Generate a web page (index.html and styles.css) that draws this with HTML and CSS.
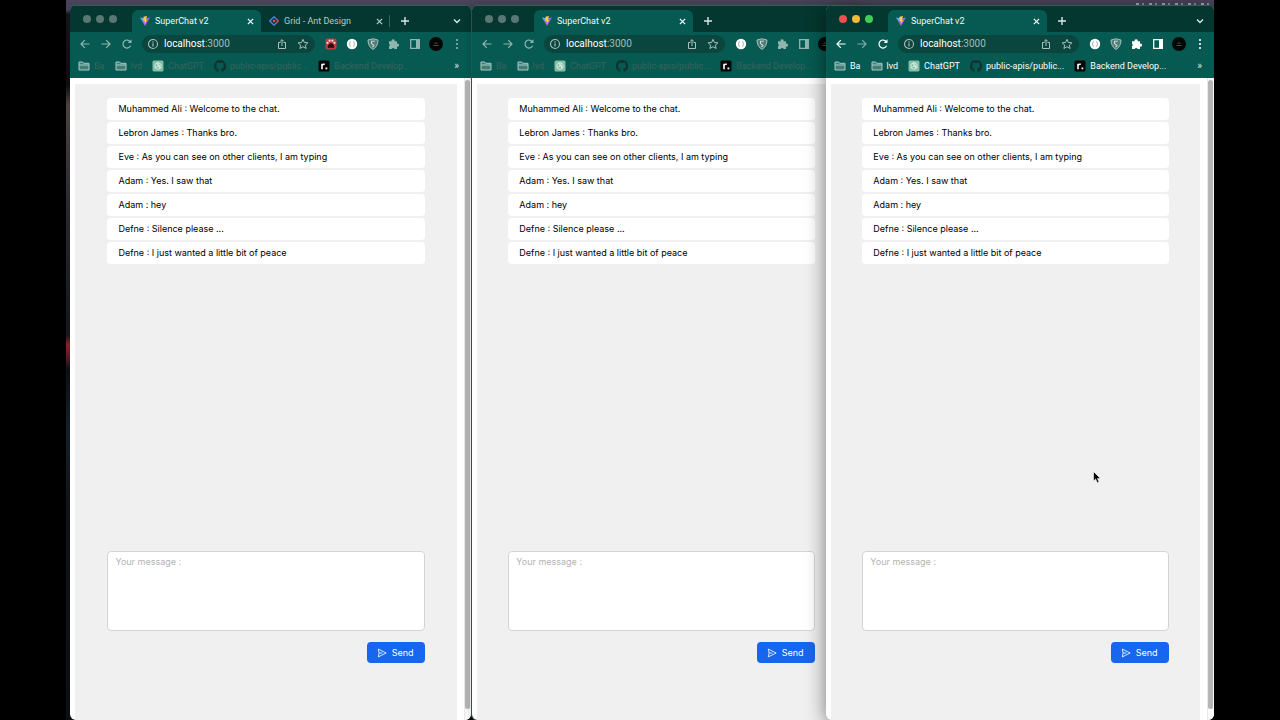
FILE: index.html
```
<!DOCTYPE html>
<html lang="en">
<head>
	<meta charset="UTF-8">
	<meta name="viewport" content="width=device-width, initial-scale=1.0">
	<title>SuperChat v2</title>
	<link rel="stylesheet" href="styles.css">
</head>
<body>

<!-- shared icons -->
<svg class="sprite" aria-hidden="true">
	<defs>
		<linearGradient id="viteBlue" x1="0" y1="0" x2="1" y2="1">
			<stop offset="0" stop-color="#41d1ff"/>
			<stop offset="0.5" stop-color="#a45cf0"/>
			<stop offset="1" stop-color="#e05ac8"/>
		</linearGradient>
		<linearGradient id="antRing" x1="0" y1="0" x2="1" y2="0">
			<stop offset="0" stop-color="#3f8cf5"/>
			<stop offset="0.6" stop-color="#5a6fd8"/>
			<stop offset="1" stop-color="#f0455a"/>
		</linearGradient>
	</defs>
	<symbol id="vite" viewBox="0 0 20 20">
		<path d="M0 3 10 20 20 3 10 5Z" fill="url(#viteBlue)"/>
		<path d="M14 0 7 1.500 6.500 9.500 9 9 8.300 12 10 11.500 9 17 14.500 7.500 11.800 8Z" fill="#ffd02f"/>
	</symbol>
	<symbol id="antd" viewBox="0 0 20 20">
		<path d="M10 1.500 18.500 10 10 18.500 1.500 10Z" fill="none" stroke="url(#antRing)" stroke-width="2.800" stroke-linejoin="round"/>
		<circle cx="10" cy="10" r="2.500" fill="#f0455a"/>
	</symbol>
	<symbol id="close" viewBox="0 0 12 12">
		<path d="M2.500 2.500 9.500 9.500M9.500 2.500 2.500 9.500" fill="none" stroke="currentColor" stroke-width="1.600"/>
	</symbol>
	<symbol id="plus" viewBox="0 0 12 12">
		<path d="M6 2V10M2 6H10" fill="none" stroke="currentColor" stroke-width="1.400"/>
	</symbol>
	<symbol id="down" viewBox="0 0 12 12">
		<path d="M3 4.500 6 7.500 9 4.500" fill="none" stroke="currentColor" stroke-width="1.400"/>
	</symbol>
	<symbol id="back" viewBox="0 0 12 12">
		<path d="M10.500 6H2M5.800 2.200 2 6 5.800 9.800" fill="none" stroke="currentColor" stroke-width="1.200"/>
	</symbol>
	<symbol id="forward" viewBox="0 0 12 12">
		<path d="M1.500 6H10M6.200 2.200 10 6 6.200 9.800" fill="none" stroke="currentColor" stroke-width="1.200"/>
	</symbol>
	<symbol id="reload" viewBox="0 0 12 12">
		<path d="M9.600 7.800A4 4 0 1 1 9.200 3.600" fill="none" stroke="currentColor" stroke-width="1.200"/>
		<path d="M10.500 1.300V5H6.800Z" fill="currentColor"/>
	</symbol>
	<symbol id="info" viewBox="0 0 12 12">
		<circle cx="6" cy="6" r="4.500" fill="none" stroke="currentColor" stroke-width="1.100"/>
		<path d="M6 5.300V8.500M6 3.300V4.500" fill="none" stroke="currentColor" stroke-width="1.200"/>
	</symbol>
	<symbol id="share" viewBox="0 0 12 12">
		<path d="M4.500 4.500H2.500V10.500H9.500V4.500H7.500M6 8V1.800M4.200 3.400 6 1.600 7.800 3.400" fill="none" stroke="currentColor" stroke-width="1"/>
	</symbol>
	<symbol id="star" viewBox="0 0 12 12">
		<path d="M6 1.300 7.400 4.500 10.900 4.800 8.300 7.100 9.100 10.500 6 8.700 2.900 10.500 3.700 7.100 1.100 4.800 4.600 4.500Z" fill="none" stroke="currentColor" stroke-width="1"/>
	</symbol>
	<symbol id="paw" viewBox="0 0 12 12">
		<rect x="0.500" y="0.500" width="11" height="11" rx="2" fill="#c23b42"/>
		<path d="M6 5.200C8 5.200 9.600 8 9.200 9.300 8.800 10.600 7.500 9.800 6 9.800S3.200 10.600 2.800 9.300C2.400 8 4 5.200 6 5.200Z" fill="#2b0d12"/>
		<g fill="#f3dcdc"><circle cx="2.500" cy="4.800" r="1.100"/><circle cx="4.600" cy="2.700" r="1.100"/><circle cx="7.400" cy="2.700" r="1.100"/><circle cx="9.500" cy="4.800" r="1.100"/></g>
	</symbol>
	<symbol id="json" viewBox="0 0 12 12">
		<circle cx="6" cy="6" r="5.200" fill="#fff"/>
		<path d="M4.700 3.500C3.500 3.500 4.300 5.500 3.200 6 4.300 6.500 3.500 8.500 4.700 8.500M7.300 3.500C8.500 3.500 7.700 5.500 8.800 6 7.700 6.500 8.500 8.500 7.300 8.500" fill="none" stroke="#8c9a98" stroke-width="0.900"/>
	</symbol>
	<symbol id="shield" viewBox="0 0 12 12">
		<path d="M6 0.800 11 2C11 6.500 9 9.700 6 11.400 3 9.700 1 6.500 1 2Z" fill="#4f7d78" stroke="#a9c0bc" stroke-width="1"/>
		<path d="M7.800 3.300H4.500V5.500L7 7.500 5.500 9" fill="none" stroke="#c9d8d5" stroke-width="1.100"/>
	</symbol>
	<symbol id="puzzle" viewBox="0 0 12 12">
		<path d="M1 3.300H3.700A1.500 1.500 0 1 1 6.500 3.300H9V5.700A1.500 1.500 0 1 1 9 8.500V11H6.600A1.500 1.500 0 0 0 3.700 11H1V8.300A1.500 1.500 0 0 0 1 5.700Z" fill="currentColor"/>
	</symbol>
	<symbol id="panel" viewBox="0 0 12 12">
		<path d="M1.700 1.700H10.300V10.300H1.700Z" fill="none" stroke="currentColor" stroke-width="1.300"/>
		<path d="M7 1.500H10.500V10.500H7Z" fill="currentColor"/>
	</symbol>
	<symbol id="avatar" viewBox="0 0 14 14">
		<circle cx="7" cy="7" r="7" fill="#050707"/>
		<path d="M4.500 8.500H9.500M5.500 7 7 5.500 8.500 7" fill="none" stroke="#7a4640" stroke-width="0.900"/>
	</symbol>
	<symbol id="dots" viewBox="0 0 12 12">
		<g fill="currentColor"><circle cx="6" cy="2" r="1.100"/><circle cx="6" cy="6" r="1.100"/><circle cx="6" cy="10" r="1.100"/></g>
	</symbol>
	<symbol id="folder" viewBox="0 0 12 12">
		<path d="M1 10V2H4.700L5.700 3.300H11V10Z" fill="#3f7f77" stroke="currentColor" stroke-width="1"/>
		<path d="M1 5H11" stroke="currentColor" stroke-width="1.100"/>
	</symbol>
	<symbol id="gpt" viewBox="0 0 12 12">
		<rect x="0.500" y="0.500" width="11" height="11" rx="1.500" fill="#84bda6"/>
		<path d="M6 2.500 9 4.300V7.700L6 9.500 3 7.700V4.300ZM6 2.500V6L9 7.700M6 6 3 7.700M4.500 3.500 7.500 5.200V8.500" fill="none" stroke="#e4f4ec" stroke-width="0.800"/>
	</symbol>
	<symbol id="github" viewBox="0 0 16 16">
		<path fill="#10332f" d="M8 0a8 8 0 0 0-2.530 15.590c.4.070.55-.17.550-.38v-1.490c-2.230.490-2.700-.94-2.700-.94-.36-.93-.89-1.170-.89-1.170-.73-.5.060-.49.060-.49.800.060 1.230.830 1.230.830.710 1.220 1.870.870 2.330.660.070-.52.280-.87.510-1.070-1.780-.2-3.640-.89-3.640-3.950 0-.87.310-1.590.820-2.150-.08-.2-.36-1.020.080-2.120 0 0 .67-.21 2.200.820a7.600 7.600 0 0 1 4 0c1.530-1.040 2.200-.82 2.200-.82.440 1.100.160 1.920.080 2.120.510.560.820 1.270.820 2.150 0 3.070-1.870 3.750-3.650 3.950.290.250.540.730.540 1.480v2.200c0 .21.150.46.550.38A8 8 0 0 0 8 0Z"/>
	</symbol>
	<symbol id="roadmap" viewBox="0 0 12 12">
		<rect x="0.500" y="0.500" width="11" height="11" rx="1.500" fill="#050707"/>
		<path d="M4 9.300V3.800M4 6C4 4.500 5 4 6.800 4.300" fill="none" stroke="#fff" stroke-width="1.600"/>
		<rect x="7.500" y="7.500" width="1.800" height="1.800" fill="#fff"/>
	</symbol>
	<symbol id="send" viewBox="0 0 12 12">
		<path d="M1.500 1.300 11 6 1.500 10.700 2.600 6ZM2.600 6H6.500" fill="none" stroke="currentColor" stroke-width="1" stroke-linejoin="round"/>
	</symbol>
</svg>

<div class="desktop">
	<div class="menubar-edge"></div>

	<!-- first client -->
	<section class="window window-one">
		<header class="chrome">
			<div class="tabs">
				<div class="lights"><span></span><span></span><span></span></div>
				<div class="tab active">
					<svg class="fav"><use href="#vite"/></svg>
					<span class="tab-title">SuperChat v2</span>
					<button type="button" class="tab-close" aria-label="Close tab"><svg class="icon-small"><use href="#close"/></svg></button>
				</div>
				<div class="tab last">
					<svg class="fav"><use href="#antd"/></svg>
					<span class="tab-title">Grid - Ant Design</span>
					<button type="button" class="tab-close" aria-label="Close tab"><svg class="icon-small"><use href="#close"/></svg></button>
				</div>
				<button type="button" class="tool new-tab" aria-label="New tab"><svg class="icon"><use href="#plus"/></svg></button>
				<button type="button" class="tool tab-list" aria-label="Search tabs"><svg class="icon"><use href="#down"/></svg></button>
			</div>
			<div class="toolbar">
				<button type="button" class="tool" aria-label="Back"><svg class="icon"><use href="#back"/></svg></button>
				<button type="button" class="tool" aria-label="Forward"><svg class="icon"><use href="#forward"/></svg></button>
				<button type="button" class="tool" aria-label="Reload"><svg class="icon"><use href="#reload"/></svg></button>
				<div class="address">
					<svg class="icon"><use href="#info"/></svg>
					<span class="url">localhost<span class="port">:3000</span></span>
					<button type="button" class="tool" aria-label="Share"><svg class="icon"><use href="#share"/></svg></button>
					<button type="button" class="tool" aria-label="Bookmark"><svg class="icon"><use href="#star"/></svg></button>
				</div>
				<button type="button" class="tool" aria-label="Paw extension"><svg class="icon"><use href="#paw"/></svg></button>
				<button type="button" class="tool" aria-label="JSON viewer"><svg class="icon"><use href="#json"/></svg></button>
				<button type="button" class="tool" aria-label="Shield"><svg class="icon"><use href="#shield"/></svg></button>
				<button type="button" class="tool" aria-label="Extensions"><svg class="icon"><use href="#puzzle"/></svg></button>
				<button type="button" class="tool" aria-label="Side panel"><svg class="icon"><use href="#panel"/></svg></button>
				<button type="button" class="tool" aria-label="Profile"><svg class="avatar"><use href="#avatar"/></svg></button>
				<button type="button" class="tool" aria-label="Menu"><svg class="icon"><use href="#dots"/></svg></button>
			</div>
			<nav class="bookmarks">
				<a href="#"><svg class="icon"><use href="#folder"/></svg><span>Ba</span></a>
				<a href="#"><svg class="icon"><use href="#folder"/></svg><span>lvd</span></a>
				<a href="#"><svg class="icon"><use href="#gpt"/></svg><span>ChatGPT</span></a>
				<a href="#"><svg class="icon"><use href="#github"/></svg><span>public-apis/public...</span></a>
				<a href="#"><svg class="icon"><use href="#roadmap"/></svg><span>Backend Develop...</span></a>
				<button type="button" class="tool more" aria-label="More bookmarks">»</button>
			</nav>
		</header>
		<div class="viewport">
			<main class="page">
				<form class="chat">
					<ul class="messages">
						<li>Muhammed Ali : Welcome to the chat.</li>
						<li>Lebron James : Thanks bro.</li>
						<li>Eve : As you can see on other clients, I am typing</li>
						<li>Adam : Yes. I saw that</li>
						<li>Adam : hey</li>
						<li>Defne : Silence please ...</li>
						<li>Defne : I just wanted a little bit of peace</li>
					</ul>
					<textarea class="message-input" aria-label="Your message" placeholder="Your message :"></textarea>
					<button type="button" class="send"><svg class="icon-send"><use href="#send"/></svg>Send</button>
				</form>
			</main>
			<div class="scrollbar"><div class="thumb"></div></div>
		</div>
	</section>

	<!-- second client -->
	<section class="window window-two">
		<header class="chrome">
			<div class="tabs">
				<div class="lights"><span></span><span></span><span></span></div>
				<div class="tab active">
					<svg class="fav"><use href="#vite"/></svg>
					<span class="tab-title">SuperChat v2</span>
					<button type="button" class="tab-close" aria-label="Close tab"><svg class="icon-small"><use href="#close"/></svg></button>
				</div>
				<button type="button" class="tool new-tab" aria-label="New tab"><svg class="icon"><use href="#plus"/></svg></button>
				<button type="button" class="tool tab-list" aria-label="Search tabs"><svg class="icon"><use href="#down"/></svg></button>
			</div>
			<div class="toolbar">
				<button type="button" class="tool" aria-label="Back"><svg class="icon"><use href="#back"/></svg></button>
				<button type="button" class="tool" aria-label="Forward"><svg class="icon"><use href="#forward"/></svg></button>
				<button type="button" class="tool" aria-label="Reload"><svg class="icon"><use href="#reload"/></svg></button>
				<div class="address">
					<svg class="icon"><use href="#info"/></svg>
					<span class="url">localhost<span class="port">:3000</span></span>
					<button type="button" class="tool" aria-label="Share"><svg class="icon"><use href="#share"/></svg></button>
					<button type="button" class="tool" aria-label="Bookmark"><svg class="icon"><use href="#star"/></svg></button>
				</div>
				<button type="button" class="tool" aria-label="JSON viewer"><svg class="icon"><use href="#json"/></svg></button>
				<button type="button" class="tool" aria-label="Shield"><svg class="icon"><use href="#shield"/></svg></button>
				<button type="button" class="tool" aria-label="Extensions"><svg class="icon"><use href="#puzzle"/></svg></button>
				<button type="button" class="tool" aria-label="Side panel"><svg class="icon"><use href="#panel"/></svg></button>
				<button type="button" class="tool" aria-label="Profile"><svg class="avatar"><use href="#avatar"/></svg></button>
				<button type="button" class="tool" aria-label="Menu"><svg class="icon"><use href="#dots"/></svg></button>
			</div>
			<nav class="bookmarks">
				<a href="#"><svg class="icon"><use href="#folder"/></svg><span>Ba</span></a>
				<a href="#"><svg class="icon"><use href="#folder"/></svg><span>lvd</span></a>
				<a href="#"><svg class="icon"><use href="#gpt"/></svg><span>ChatGPT</span></a>
				<a href="#"><svg class="icon"><use href="#github"/></svg><span>public-apis/public...</span></a>
				<a href="#"><svg class="icon"><use href="#roadmap"/></svg><span>Backend Develop...</span></a>
			</nav>
		</header>
		<div class="viewport">
			<main class="page">
				<form class="chat">
					<ul class="messages">
						<li>Muhammed Ali : Welcome to the chat.</li>
						<li>Lebron James : Thanks bro.</li>
						<li>Eve : As you can see on other clients, I am typing</li>
						<li>Adam : Yes. I saw that</li>
						<li>Adam : hey</li>
						<li>Defne : Silence please ...</li>
						<li>Defne : I just wanted a little bit of peace</li>
					</ul>
					<textarea class="message-input" aria-label="Your message" placeholder="Your message :"></textarea>
					<button type="button" class="send"><svg class="icon-send"><use href="#send"/></svg>Send</button>
				</form>
			</main>
			<div class="scrollbar"><div class="thumb"></div></div>
		</div>
	</section>

	<!-- third client, focused -->
	<section class="window window-three focused">
		<header class="chrome">
			<div class="tabs">
				<div class="lights"><span></span><span></span><span></span></div>
				<div class="tab active">
					<svg class="fav"><use href="#vite"/></svg>
					<span class="tab-title">SuperChat v2</span>
					<button type="button" class="tab-close" aria-label="Close tab"><svg class="icon-small"><use href="#close"/></svg></button>
				</div>
				<button type="button" class="tool new-tab" aria-label="New tab"><svg class="icon"><use href="#plus"/></svg></button>
				<button type="button" class="tool tab-list" aria-label="Search tabs"><svg class="icon"><use href="#down"/></svg></button>
			</div>
			<div class="toolbar">
				<button type="button" class="tool" aria-label="Back"><svg class="icon"><use href="#back"/></svg></button>
				<button type="button" class="tool faded" aria-label="Forward"><svg class="icon"><use href="#forward"/></svg></button>
				<button type="button" class="tool" aria-label="Reload"><svg class="icon"><use href="#reload"/></svg></button>
				<div class="address">
					<svg class="icon"><use href="#info"/></svg>
					<span class="url">localhost<span class="port">:3000</span></span>
					<button type="button" class="tool" aria-label="Share"><svg class="icon"><use href="#share"/></svg></button>
					<button type="button" class="tool" aria-label="Bookmark"><svg class="icon"><use href="#star"/></svg></button>
				</div>
				<button type="button" class="tool" aria-label="JSON viewer"><svg class="icon"><use href="#json"/></svg></button>
				<button type="button" class="tool" aria-label="Shield"><svg class="icon"><use href="#shield"/></svg></button>
				<button type="button" class="tool" aria-label="Extensions"><svg class="icon"><use href="#puzzle"/></svg></button>
				<button type="button" class="tool" aria-label="Side panel"><svg class="icon"><use href="#panel"/></svg></button>
				<button type="button" class="tool" aria-label="Profile"><svg class="avatar"><use href="#avatar"/></svg></button>
				<button type="button" class="tool" aria-label="Menu"><svg class="icon"><use href="#dots"/></svg></button>
			</div>
			<nav class="bookmarks">
				<a href="#"><svg class="icon"><use href="#folder"/></svg><span>Ba</span></a>
				<a href="#"><svg class="icon"><use href="#folder"/></svg><span>lvd</span></a>
				<a href="#"><svg class="icon"><use href="#gpt"/></svg><span>ChatGPT</span></a>
				<a href="#"><svg class="icon"><use href="#github"/></svg><span>public-apis/public...</span></a>
				<a href="#"><svg class="icon"><use href="#roadmap"/></svg><span>Backend Develop...</span></a>
				<button type="button" class="tool more" aria-label="More bookmarks">»</button>
			</nav>
		</header>
		<div class="viewport">
			<main class="page">
				<form class="chat">
					<ul class="messages">
						<li>Muhammed Ali : Welcome to the chat.</li>
						<li>Lebron James : Thanks bro.</li>
						<li>Eve : As you can see on other clients, I am typing</li>
						<li>Adam : Yes. I saw that</li>
						<li>Adam : hey</li>
						<li>Defne : Silence please ...</li>
						<li>Defne : I just wanted a little bit of peace</li>
					</ul>
					<textarea class="message-input" aria-label="Your message" placeholder="Your message :"></textarea>
					<button type="button" class="send"><svg class="icon-send"><use href="#send"/></svg>Send</button>
				</form>
			</main>
			<div class="scrollbar"><div class="thumb"></div></div>
		</div>
	</section>

	<svg class="pointer" viewBox="0 0 8 13">
		<path d="M0.500 0.500V10L2.700 8 4.200 11.800 6 11 4.500 7.400H7.400Z" fill="#000" stroke="#fff" stroke-width="0.600"/>
	</svg>
</div>

</body>
</html>
```
FILE: styles.css
```
* {
	box-sizing: border-box;
}
body {
	margin: 0;
	background: #000;
	font-family: Inter, "Liberation Sans", sans-serif;
	font-size: 9px;
}
button {
	font-family: inherit;
	border: none;
	padding: 0;
	background: none;
	color: inherit;
	cursor: pointer;
}
svg {
	display: block;
	flex: none;
}
.sprite {
	position: absolute;
	width: 0;
	height: 0;
}
.desktop {
	position: relative;
	height: 100vh;
	margin: 0 66px;
	overflow: hidden;
	background: linear-gradient(#4a4459 0, #46405a 10px, #15131c 14px, #0c0c10 85px, #4c423f 105px, #2b2a33 200px, #15161c 335px, #8c1f2a 345px, #4a1820 360px, #0a0f14 370px, #16202a 430px, #10141a 500px, #0b0e12 100%);
}
/* bottom of the wallpaper lettering above the last window */
.menubar-edge {
	position: absolute;
	top: 3px;
	right: 4px;
	width: 74px;
	height: 2px;
	background: repeating-linear-gradient(90deg, #a9a5b5 0 3px, #4a4459 3px 6px, #8d899c 6px 8px, #4a4459 8px 13px);
}

/* windows */
.window {
	position: absolute;
	top: 5px;
	bottom: 0;
	width: 388px;
	display: flex;
	flex-direction: column;
	overflow: hidden;
	border-radius: 6px;
	background: #fff;
}
.window-one {
	left: 4px;
	width: 401px;
}
.window-two {
	left: 406px;
	box-shadow: 0 0 0 1px #3c4a4b, 0 0 8px rgba(0, 0, 0, 0.2);
}
.window-three {
	left: 760px;
	box-shadow: 0 4px 20px rgba(0, 0, 0, 0.5);
}
.chrome {
	background: #065a51;
	color: #8fb5ae;
	font-family: Roboto, "Liberation Sans", sans-serif;
}
.focused .chrome {
	color: #fff;
}

/* tab strip */
.tabs {
	display: flex;
	height: 27px;
	padding-right: 4px;
	background: #04372f;
	border-top: 1px solid #355c57;
}
.lights {
	display: flex;
	flex: none;
	gap: 5px;
	width: 62px;
	padding: 9px 0 0 13px;
}
.lights span {
	width: 8px;
	height: 8px;
	border-radius: 50%;
	background: #5b7773;
}
.focused .lights span:nth-child(1) {
	background: #ee4f52;
}
.focused .lights span:nth-child(2) {
	background: #eebb3a;
}
.focused .lights span:nth-child(3) {
	background: #3fcf52;
}
.tab {
	display: flex;
	align-items: center;
	flex: none;
	gap: 5px;
	width: 159px;
	margin-top: 4px;
	padding: 0 6px 0 8px;
	color: #b5cbc7;
}
.window-one .tab {
	width: 129px;
}
.tab.active {
	background: #065a51;
	border-radius: 6px 6px 0 0;
	color: #f2f8f7;
}
.tab.last {
	background: linear-gradient(#3c625d, #3c625d) right center / 1px 12px no-repeat;
}
.tab-title {
	flex: 1;
	white-space: nowrap;
}
.fav {
	width: 10px;
	height: 10px;
}
.icon-small {
	width: 9px;
	height: 9px;
}
.icon {
	width: 12px;
	height: 12px;
}
.avatar {
	width: 14px;
	height: 14px;
}
.tool {
	display: flex;
	flex: none;
	align-items: center;
	justify-content: center;
	width: 21px;
	height: 18px;
}
.faded {
	opacity: 0.5;
}
.new-tab,
.tab-list {
	align-self: center;
	margin: 4px 0 0 4px;
	color: #dbe8e6;
}
.tab-list {
	margin-left: auto;
}

/* toolbar */
.toolbar {
	display: flex;
	align-items: center;
	height: 23px;
	padding: 0 4px;
}
.address {
	display: flex;
	flex: 1;
	align-items: center;
	height: 18px;
	margin: 0 5px;
	padding: 0 2px 0 5px;
	border-radius: 9px;
	background: #0a453e;
	color: #a8c2be;
}
.url {
	flex: 1;
	padding-left: 5px;
	color: #fff;
	font-size: 10px;
}
.port {
	color: #a3bdb9;
}

/* bookmarks */
.bookmarks {
	display: flex;
	align-items: center;
	gap: 10px;
	height: 23px;
	padding: 0 4px 2px 8px;
	white-space: nowrap;
}
.bookmarks a {
	display: flex;
	align-items: center;
	gap: 4px;
	color: #a9c9c3;
	text-decoration: none;
}
.bookmarks a span {
	color: #3a625d;
}
.focused .bookmarks a span {
	color: #fff;
}
.more {
	margin-left: auto;
	color: #dbe8e6;
	font-size: 10px;
}

/* chat page */
.viewport {
	display: flex;
	flex: 1;
	min-height: 0;
}
.page {
	display: flex;
	flex: 1;
	margin: 6px 7px 0 5px;
	background: #f0f0f0;
}
.chat {
	display: flex;
	flex-direction: column;
	width: 83%;
	margin: 0 auto;
	padding: 14px 0 57px;
}
.messages {
	display: flex;
	flex: 1;
	flex-direction: column;
	gap: 2px;
	margin: 0;
	padding: 0;
	list-style: none;
}
.messages li {
	padding: 3px 11px;
	border-radius: 4px;
	background: #fff;
	color: #000;
	line-height: 16px;
}
.message-input {
	display: block;
	width: 100%;
	height: 80px;
	margin: 0 0 11px;
	padding: 2px 7px;
	border: 1px solid #d4d4d4;
	border-radius: 4px;
	background: #fff;
	font-family: inherit;
	font-size: 9px;
	line-height: 16px;
	resize: none;
}
.message-input::placeholder {
	color: #b3b3b3;
}
.send {
	display: flex;
	align-items: center;
	align-self: flex-end;
	gap: 5px;
	height: 21px;
	padding: 0 11px 0 10px;
	border-radius: 4px;
	background: #1766f0;
	color: #fff;
	font-size: 9px;
}
.icon-send {
	width: 10px;
	height: 10px;
}
.scrollbar {
	width: 7px;
	padding: 2px 1px 11px 0;
	border-left: 1px solid #e8e8e8;
	background: #fafafa;
}
.thumb {
	height: 100%;
	border-radius: 3px;
	background: #b5b5b5;
}
.pointer {
	position: absolute;
	top: 471px;
	left: 1027px;
	width: 8px;
	height: 13px;
}
```
